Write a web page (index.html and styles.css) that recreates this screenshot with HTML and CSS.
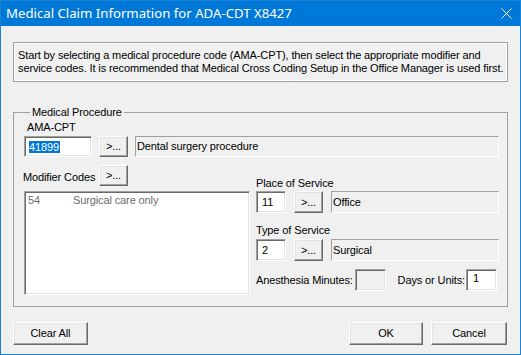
FILE: index.html
```html
<!DOCTYPE html>
<html>
<head>
<meta charset="utf-8">
<link rel="stylesheet" href="styles.css">
</head>
<body>
<div class="window">
  <div class="titlebar">
    <span class="title">Medical Claim Information for ADA-CDT X8427</span>
    <span class="close"><svg width="11" height="11" viewBox="0 0 11 11"><path d="M0.5 0.5L10.5 10.5M10.5 0.5L0.5 10.5" stroke="#fff" stroke-width="1" fill="none"/></svg></span>
  </div>
  <div class="content">
    <div class="info">Start by selecting a medical procedure code (AMA-CPT), then select the appropriate modifier and<br>service codes. It is recommended that Medical Cross Coding Setup in the Office Manager is used first.</div>
    <fieldset class="group">
      <legend class="legend">Medical Procedure</legend>
      <div class="cpt-label">AMA-CPT</div>
      <div class="row cpt-row">
        <div class="edit cpt-edit"><span class="sel">41899</span></div>
        <div class="btn pick">&gt;...</div>
        <div class="static grow">Dental surgery procedure</div>
      </div>
      <div class="lower">
        <div class="left">
          <div class="mod-head">
            <span class="mod-label">Modifier Codes</span>
            <div class="btn pick mod-btn">&gt;...</div>
          </div>
          <div class="list">
            <div class="item"><span class="code">54</span><span>Surgical care only</span></div>
          </div>
        </div>
        <div class="right">
          <div class="field-label first">Place of Service</div>
          <div class="row svc-row">
            <div class="edit svc-edit">11</div>
            <div class="btn pick">&gt;...</div>
            <div class="static grow">Office</div>
          </div>
          <div class="field-label second">Type of Service</div>
          <div class="row svc-row">
            <div class="edit svc-edit">2</div>
            <div class="btn pick">&gt;...</div>
            <div class="static grow">Surgical</div>
          </div>
          <div class="row extra-row">
            <span class="inline-label">Anesthesia Minutes:</span>
            <div class="edit small-edit disabled"></div>
            <span class="spacer"></span>
            <span class="inline-label">Days or Units:</span>
            <div class="edit small-edit units">1</div>
          </div>
        </div>
      </div>
    </fieldset>
    <div class="footer">
      <div class="btn action clear">Clear All</div>
      <span class="spacer"></span>
      <div class="btn action ok">OK</div>
      <div class="btn action cancel">Cancel</div>
    </div>
  </div>
</div>
</body>
</html>
```
FILE: styles.css
```css
* { box-sizing: border-box; }
html, body { margin: 0; padding: 0; }
body {
  width: 521px;
  height: 355px;
  overflow: hidden;
  background: #f0f0f0;
  font-family: "Liberation Sans", Arial, sans-serif;
  font-size: 11px;
  line-height: 13px;
  letter-spacing: -0.12px;
  color: #000;
}
.window {
  width: 521px;
  height: 355px;
  border: 1px solid #1883d7;
  background: #f0f0f0;
  display: flex;
  flex-direction: column;
}
.titlebar {
  height: 25px;
  flex: none;
  background: #0078d7;
  color: #fff;
  display: flex;
  align-items: center;
  padding-left: 5px;
  font-family: "Noto Sans", "Open Sans", sans-serif;
  font-size: 13.2px;
  letter-spacing: 0;
}
.title { flex: 1; white-space: nowrap; }
.close {
  width: 30px;
  height: 25px;
  display: flex;
  align-items: center;
  justify-content: center;
  padding-left: 2px;
}
.content {
  flex: 1;
  padding: 16px 12px 0 12px;
  display: flex;
  flex-direction: column;
}
.info {
  height: 40px;
  border: 1px solid #a0a0a0;
  box-shadow: inset 1px 1px #fff, inset -1px -1px #fff;
  padding: 6px 4px 0 4px;
  white-space: nowrap;
}
.group {
  margin: 24px 0 0 0;
  border: 1px solid #a0a0a0;
  padding: 2px 8px 11px 10px;
  min-width: 0;
}
.legend {
  padding: 0 2px;
  margin-left: 6px;
  line-height: 13px;
}
.cpt-label { margin-left: 3px; }
.row { display: flex; align-items: stretch; }
.cpt-row { margin-top: 2px; height: 21px; }
.edit {
  background: #fff;
  border: 1px solid;
  border-color: #a0a0a0 #fff #fff #a0a0a0;
  box-shadow: inset 1px 1px #696969, inset -1px -1px #e3e3e3;
  display: flex;
  align-items: center;
  padding-left: 4px;
}
.cpt-edit { width: 68px; }
.sel { background: #0078d7; color: #fff; padding: 0 1px 0 0; line-height: 12px; }
.btn {
  background: #f0f0f0;
  border: 1px solid;
  border-color: #fff #696969 #696969 #fff;
  box-shadow: inset -1px -1px #a0a0a0, inset 1px 1px #e3e3e3;
  display: flex;
  align-items: center;
  justify-content: center;
}
.pick { width: 29px; margin-left: 7px; }
.static {
  background: #f0f0f0;
  border: 1px solid;
  border-color: #a0a0a0 #fff #fff #a0a0a0;
  display: flex;
  align-items: center;
  padding-left: 1px;
  margin-left: 7px;
}
.grow { flex: 1; }
.lower { display: flex; margin-top: 8px; }
.left { width: 226px; display: flex; flex-direction: column; }
.mod-head { display: flex; align-items: flex-end; height: 21px; }
.mod-label { margin-left: -1px; width: 76px; padding-bottom: 2px; }
.mod-btn { margin-left: 0; height: 21px; }
.list {
  margin-top: 5px;
  height: 104px;
  background: #fff;
  border: 1px solid;
  border-color: #a0a0a0 #fff #fff #a0a0a0;
  box-shadow: inset 1px 1px #696969, inset -1px -1px #e3e3e3;
  padding: 2px 3px;
  color: #6d6d6d;
}
.item { display: flex; }
.code { width: 45px; }
.right { flex: 1; margin-left: 6px; display: flex; flex-direction: column; }
.field-label.first { margin-top: 12px; }
.field-label.second { margin-top: 11px; }
.svc-row { height: 22px; margin-top: 1px; }
.field-label.second + .svc-row { margin-top: 2px; }
.svc-edit { width: 30px; padding-left: 5px; }
.svc-row .pick { margin-left: 8px; }
.svc-row .static { margin-left: 8px; }
.extra-row { height: 22px; margin-top: 8px; align-items: center; padding-right: 2px; }
.small-edit { width: 31px; height: 22px; }
.disabled { background: #f0f0f0; margin-left: 2px; }
.units { align-items: flex-start; padding-top: 2px; padding-left: 6px; margin-left: 1px; }
.spacer { flex: 1; }
.footer { display: flex; margin-top: 15px; height: 23px; }
.action { height: 23px; }
.clear { width: 75px; }
.ok { width: 74px; }
.cancel { width: 76px; margin-left: 8px; margin-right: 1px; }
```
